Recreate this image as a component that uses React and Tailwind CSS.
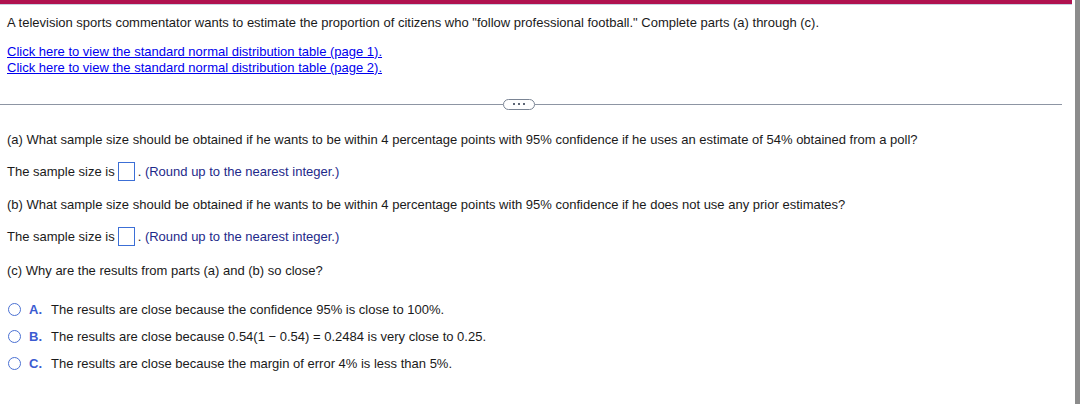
import React from 'react';

const AnswerBox = () => (
  <span className="inline-block w-[17px] h-[19px] border border-[#3c6fd6] align-middle mx-[3px] -mt-[2px]" />
);

const Option = ({ letter, children }) => (
  <div className="flex items-center h-[27px]">
    <span className="w-[13px] h-[13px] rounded-full border-[1.5px] border-[#4b71d3] ml-[8px] mr-[8px]" />
    <span className="w-[22px] text-[#3b5bd1] font-bold">{letter}.</span>
    <span>{children}</span>
  </div>
);

export default function App() {
  const font = { fontFamily: '"Liberation Sans", Arial, sans-serif' };

  return (
    <div className="relative w-[1080px] h-[406px] bg-white text-[13px] text-[#1a1a1a] overflow-hidden" style={font}>
      {/* scrollbar */}
      <div className="absolute top-0 right-0 w-[5px] h-[404px] bg-[#8c8c8c]" />

      <div className="w-[1072px] h-[4px] bg-[#b0124f]" />
      <div className="w-[1072px] h-[1px] bg-[#c7d0e0]" />

      <div className="pl-[7px] pr-[18px]">
        <p className="mt-[10px] leading-[15px]">
          A television sports commentator wants to estimate the proportion of citizens who "follow professional football." Complete parts (a) through (c).
        </p>
        <div className="mt-[14px] leading-[16px] text-[#0000ee]">
          <a className="underline block w-fit">Click here to view the standard normal distribution table (page 1).</a>
          <a className="underline block w-fit">Click here to view the standard normal distribution table (page 2).</a>
        </div>
      </div>

      {/* divider with pill */}
      <div className="flex items-center w-[1062px] mt-[22px] h-[12px]">
        <div className="w-[503px] h-[1px] bg-[#8d95a3]" />
        <div className="w-[32px] h-[11px] rounded-full border border-[#7a8494] flex items-center justify-center gap-[3px]">
          <span className="w-[2px] h-[2px] bg-[#5d6675]" />
          <span className="w-[2px] h-[2px] bg-[#5d6675]" />
          <span className="w-[2px] h-[2px] bg-[#5d6675]" />
        </div>
        <div className="flex-1 h-[1px] bg-[#8d95a3]" />
      </div>

      <div className="pl-[7px]">
        <p className="mt-[22px] leading-[16px]">
          (a) What sample size should be obtained if he wants to be within 4 percentage points with 95% confidence if he uses an estimate of 54% obtained from a poll?
        </p>
        <p className="mt-[16px] leading-[16px]">
          The sample size is<AnswerBox />. <span className="text-[#1e2a8a]">(Round up to the nearest integer.)</span>
        </p>
        <p className="mt-[16px] leading-[16px]">
          (b) What sample size should be obtained if he wants to be within 4 percentage points with 95% confidence if he does not use any prior estimates?
        </p>
        <p className="mt-[16px] leading-[16px]">
          The sample size is<AnswerBox />. <span className="text-[#1e2a8a]">(Round up to the nearest integer.)</span>
        </p>
        <p className="mt-[17px] leading-[16px]">(c) Why are the results from parts (a) and (b) so close?</p>
      </div>

      <div className="mt-[17px]">
        <Option letter="A">The results are close because the confidence 95% is close to 100%.</Option>
        <Option letter="B">The results are close because 0.54(1 − 0.54) = 0.2484 is very close to 0.25.</Option>
        <Option letter="C">The results are close because the margin of error 4% is less than 5%.</Option>
      </div>
    </div>
  );
}
